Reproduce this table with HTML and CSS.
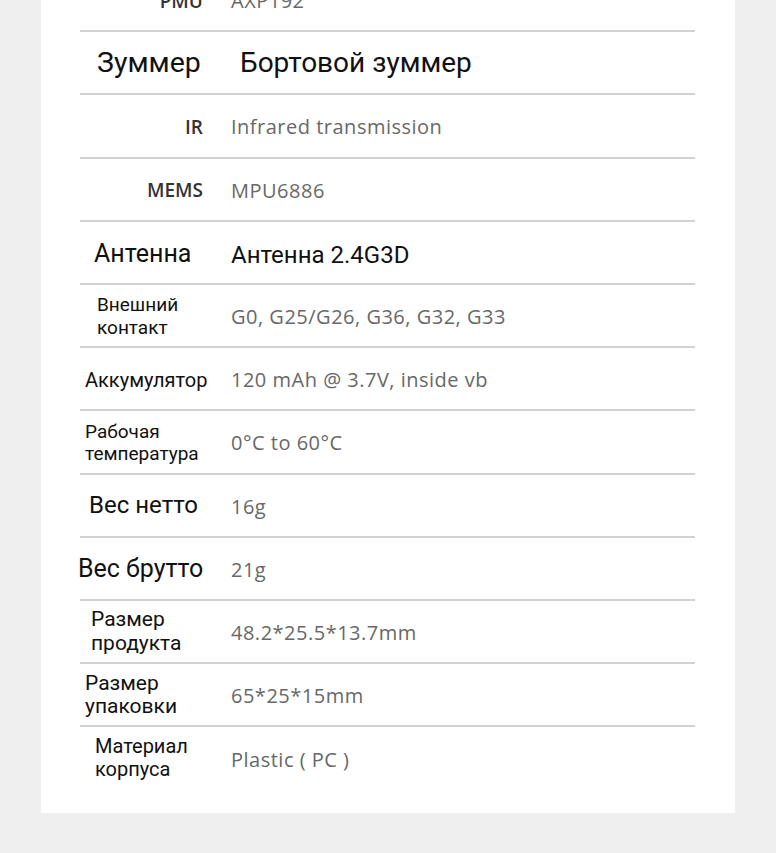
FILE: index.html
```html
<!DOCTYPE html>
<html lang="ru">
<head>
<meta charset="utf-8">
<title>Характеристики</title>
<link rel="stylesheet" href="styles.css">
</head>
<body>
<main class="sheet">
  <div class="row">
    <div class="label label--en">PMU</div>
    <div class="value">AXP192</div>
  </div>
  <div class="row">
    <div class="label label--ru lz-1">Зуммер</div>
    <div class="value value--ru vz-1">Бортовой зуммер</div>
  </div>
  <div class="row">
    <div class="label label--en">IR</div>
    <div class="value">Infrared transmission</div>
  </div>
  <div class="row">
    <div class="label label--en">MEMS</div>
    <div class="value">MPU6886</div>
  </div>
  <div class="row">
    <div class="label label--ru lz-2">Антенна</div>
    <div class="value value--ru vz-2">Антенна 2.4G3D</div>
  </div>
  <div class="row">
    <div class="label label--ru lz-3">Внешний<br>контакт</div>
    <div class="value">G0, G25/G26, G36, G32, G33</div>
  </div>
  <div class="row">
    <div class="label label--ru lz-4">Аккумулятор</div>
    <div class="value">120 mAh @ 3.7V, inside vb</div>
  </div>
  <div class="row">
    <div class="label label--ru lz-5">Рабочая<br>температура</div>
    <div class="value">0°C to 60°C</div>
  </div>
  <div class="row">
    <div class="label label--ru lz-6">Вес нетто</div>
    <div class="value">16g</div>
  </div>
  <div class="row">
    <div class="label label--ru lz-7">Вес брутто</div>
    <div class="value">21g</div>
  </div>
  <div class="row">
    <div class="label label--ru lz-8">Размер<br>продукта</div>
    <div class="value">48.2*25.5*13.7mm</div>
  </div>
  <div class="row">
    <div class="label label--ru lz-9">Размер<br>упаковки</div>
    <div class="value">65*25*15mm</div>
  </div>
  <div class="row row--last">
    <div class="label label--ru lz-10">Материал<br>корпуса</div>
    <div class="value">Plastic ( PC )</div>
  </div>
</main>
</body>
</html>
```

FILE: styles.css
```css
html, body {
  margin: 0;
  padding: 0;
  background: #efefef;
}

body {
  height: 853px;
  overflow: hidden;
}

.sheet {
  box-sizing: border-box;
  width: 694px;
  margin: -31px 0 0 41px;
  padding: 0 40px 24px 39px;
  background: #ffffff;
}

.row {
  display: grid;
  grid-template-columns: 151px 1fr;
  align-items: center;
  height: 63.2px;
  box-sizing: border-box;
  border-bottom: 2px solid #d2d2d2;
}

.row--last {
  border-bottom: 0;
  height: 62px;
}

.label {
  box-sizing: border-box;
}

.label--en {
  text-align: right;
  padding-right: 28px;
  padding-top: 2px;
  font-family: "Open Sans", "Liberation Sans", sans-serif;
  font-weight: 600;
  font-size: 19px;
  color: #333333;
}

.label--ru {
  font-family: Roboto, "Noto Sans", sans-serif;
  color: #111111;
  font-size: 20px;
  line-height: 23px;
}

.value {
  padding-top: 2px;
  font-family: "Open Sans", "Liberation Sans", sans-serif;
  font-size: 20px;
  color: #686868;
  letter-spacing: 0.5px;
}

.value--ru {
  font-family: Roboto, "Noto Sans", sans-serif;
  color: #111111;
  letter-spacing: 0;
}

.lz-1 { padding-left: 17px; font-size: 28.5px; line-height: 32px; }
.vz-1 { padding-left: 9px; font-size: 28px; padding-top: 0; }
.lz-2 { padding-left: 14px; padding-top: 3px; font-size: 25px; line-height: 30px; }
.vz-2 { font-size: 24px; padding-top: 5px; }
.lz-3 { padding-left: 17px; font-size: 19px; line-height: 23px; }
.lz-4 { padding-left: 5px; padding-top: 3px; font-size: 20px; }
.lz-5 { padding-left: 5px; padding-top: 3px; font-size: 19px; line-height: 22px; }
.lz-6 { padding-left: 9px; font-size: 24px; line-height: 30px; }
.lz-7 { margin-left: -2px; padding-top: 2px; font-size: 25px; line-height: 30px; }
.lz-8 { padding-left: 11px; font-size: 21px; line-height: 24px; }
.lz-9 { padding-left: 5px; font-size: 21px; line-height: 23px; }
.lz-10 { padding-left: 15px; font-size: 20px; line-height: 23px; }
```
